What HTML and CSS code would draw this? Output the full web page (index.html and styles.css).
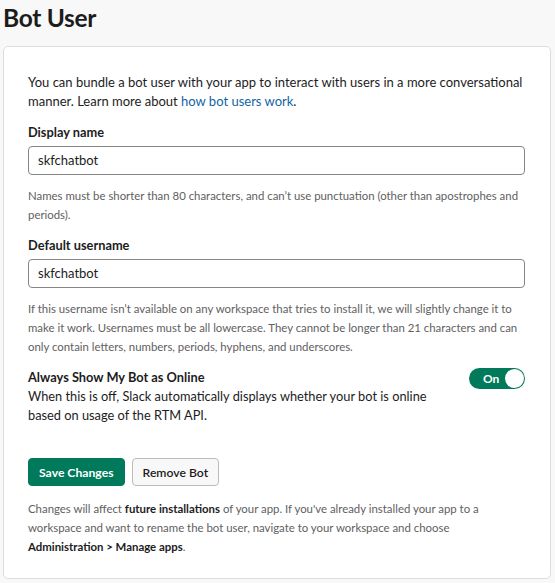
FILE: index.html
```html
<!DOCTYPE html>
<html>
<head>
<meta charset="utf-8">
<link rel="stylesheet" href="styles.css">
</head>
<body>
<h1 class="title">Bot User</h1>
<div class="card">
  <p class="intro">You can bundle a bot user with your app to interact with users in a more conversational manner. Learn more about <a class="link" href="#">how bot users work</a>.</p>

  <div class="field">
    <label class="label">Display name</label>
    <div class="input">skfchatbot</div>
    <p class="help">Names must be shorter than 80 characters, and can’t use punctuation (other than apostrophes and periods).</p>
  </div>

  <div class="field">
    <label class="label">Default username</label>
    <div class="input">skfchatbot</div>
    <p class="help">If this username isn’t available on any workspace that tries to install it, we will slightly change it to make it work. Usernames must be all lowercase. They cannot be longer than 21 characters and can only contain letters, numbers, periods, hyphens, and underscores.</p>
  </div>

  <div class="toggle-row">
    <div class="toggle-text">
      <div class="label">Always Show My Bot as Online</div>
      <div class="desc">When this is off, Slack automatically displays whether your bot is online<br>based on usage of the RTM API.</div>
    </div>
    <div class="toggle"><span class="toggle-on">On</span><span class="knob"></span></div>
  </div>

  <div class="buttons">
    <button class="btn btn-primary">Save Changes</button>
    <button class="btn btn-secondary">Remove Bot</button>
  </div>

  <p class="help footer">Changes will affect <b>future installations</b> of your app. If you've already installed your app to a workspace and want to rename the bot user, navigate to your workspace and choose <b>Administration &gt; Manage apps</b>.</p>
</div>
</body>
</html>
```

FILE: styles.css
```css
* { box-sizing: border-box; }
html, body { margin: 0; padding: 0; }
body {
  background: #f8f8f8;
  font-family: Lato, "Noto Sans", sans-serif;
  color: #1d1c1d;
  padding: 0 4px 0 3px;
}
.title {
  margin: 0;
  padding-top: 3px;
  font-size: 24.5px;
  font-weight: 700;
  line-height: 30px;
  letter-spacing: -0.3px;
  color: #1d1c1d;
}
.card {
  margin-top: 13px;
  background: #fff;
  border: 1px solid #dddddd;
  border-radius: 5px;
  padding: 26px 25px 22px 24px;
}
.intro {
  margin: 0 0 12px;
  font-size: 13px;
  line-height: 19px;
}
.link { color: #1264a3; text-decoration: none; }
.field { margin-bottom: 12.5px; }
.label {
  display: block;
  font-size: 12.8px;
  font-weight: 700;
  line-height: 18px;
  margin-bottom: 5px;
}
.input {
  height: 29px;
  border: 1px solid #868686;
  border-radius: 4px;
  padding: 0 9px;
  font-size: 13px;
  line-height: 27px;
}
.help {
  margin: 10.5px 0 0;
  font-size: 11.4px;
  line-height: 19px;
  color: #616061;
}
.help b { color: #1d1c1d; font-weight: 700; }
.toggle-row {
  display: flex;
  justify-content: space-between;
  align-items: flex-start;
}
.toggle-row .label { margin-bottom: 0; line-height: 18.5px; }
.desc {
  font-size: 12.8px;
  line-height: 19px;
}
.toggle {
  width: 56px;
  height: 21px;
  background: #007a5a;
  border-radius: 11px;
  display: flex;
  align-items: center;
  justify-content: space-between;
  padding: 0 1px 0 14px;
}
.toggle-on {
  color: #fff;
  font-size: 12px;
  font-weight: 700;
}
.knob {
  width: 19px;
  height: 19px;
  border-radius: 50%;
  background: #fff;
}
.buttons {
  display: flex;
  gap: 7px;
  margin-top: 33.5px;
}
.btn {
  font-family: Lato, "Noto Sans", sans-serif;
  font-size: 12.2px;
  height: 28px;
  border-radius: 4px;
  padding: 0 10px;
  cursor: pointer;
}
.btn-primary {
  background: #007a5a;
  color: #fff;
  border: 1px solid #007a5a;
  font-weight: 700;
}
.btn-secondary {
  background: #f8f8f8;
  color: #1d1c1d;
  border: 1px solid #bbbbbb;
  font-weight: 600;
}
.footer { margin-top: 13px; }
```
